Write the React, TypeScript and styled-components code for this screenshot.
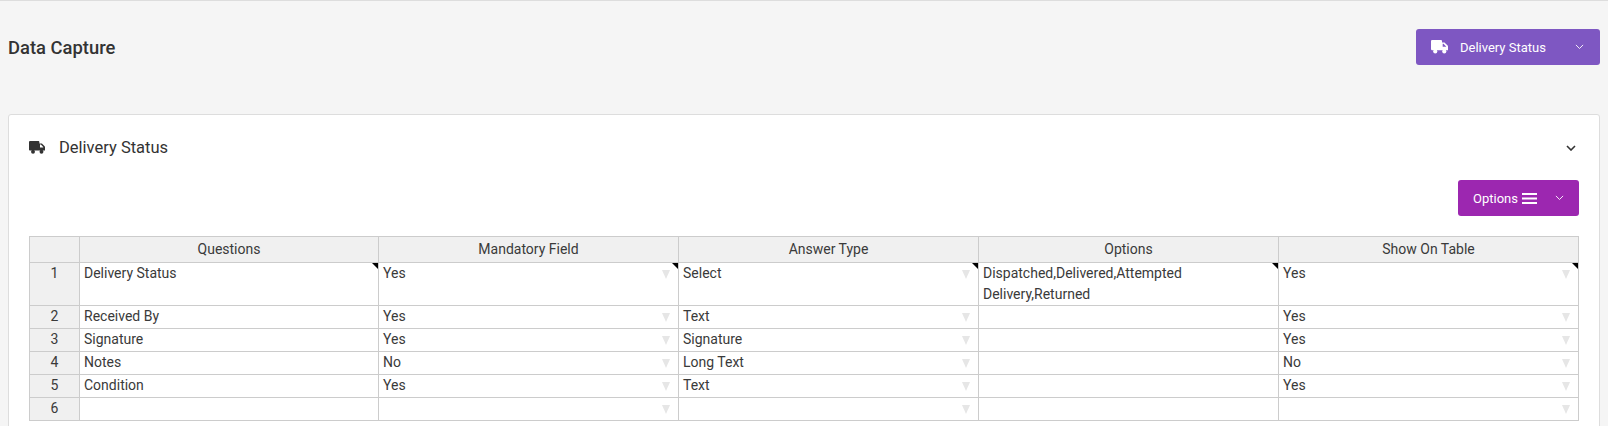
import React from "react";
import styled, { createGlobalStyle } from "styled-components";

const GlobalStyle = createGlobalStyle`
  html, body {
    margin: 0;
    padding: 0;
    background: #f5f5f5;
    font-family: Roboto, "Liberation Sans", sans-serif;
    color: #333;
    overflow: hidden;
  }
`;

const Page = styled.div`
  width: 1608px;
  height: 426px;
  box-sizing: border-box;
  border-top: 1px solid #ddd;
  overflow: hidden;
`;

const PageHeader = styled.header`
  display: flex;
  align-items: center;
  justify-content: space-between;
  height: 36px;
  margin-top: 28px;
  padding: 0 8px;
`;

const Title = styled.h1`
  margin: 1px 0 0;
  font-size: 18.4px;
  line-height: 24px;
  font-weight: 500;
  color: #333;
`;

const ActionButton = styled.button<{ $bg: string; $width: number; $pad: number }>`
  display: flex;
  align-items: center;
  box-sizing: border-box;
  width: ${(p) => p.$width}px;
  height: 36px;
  padding: 0 ${(p) => p.$pad}px 0 15px;
  border: 0;
  border-radius: 3px;
  background: ${(p) => p.$bg};
  color: #fff;
  font-family: inherit;
  font-size: 13px;
  font-weight: 400;
`;

const ButtonIcon = styled.span`
  display: flex;
  width: 29px;
`;

const ButtonLabel = styled.span`
  flex: 1;
  display: flex;
  align-items: center;
  gap: 4px;
  text-align: left;
`;

const Card = styled.section`
  box-sizing: border-box;
  height: 340px;
  margin: 49px 8px 0 8px;
  padding: 0 20px;
  background: #fff;
  border: 1px solid #ddd;
  border-radius: 3px;
`;

const CardHeader = styled.div`
  display: flex;
  align-items: center;
  height: 65px;
  padding-right: 3px;
  color: #333;
`;

const CardTitle = styled.h2`
  flex: 1;
  margin: 0 0 0 14px;
  font-size: 16.5px;
  font-weight: 400;
`;

const Toolbar = styled.div`
  display: flex;
  justify-content: flex-end;
  height: 36px;
  margin-bottom: 20px;
`;

const Sheet = styled.table`
  table-layout: fixed;
  width: 1549px;
  border-collapse: collapse;
  font-size: 14px;
  color: #3a3a3a;

  th, td {
    border: 1px solid #ccc;
    padding: 0 4px;
    line-height: 21px;
    vertical-align: top;
  }
`;

const HeadCell = styled.th`
  height: 26px;
  box-sizing: border-box;
  background: #f0f0f0;
  font-weight: 400;
  text-align: center;
  vertical-align: middle !important;
`;

const RowNumber = styled.th`
  background: #f0f0f0;
  font-weight: 400;
  text-align: center;
`;

const Cell = styled.td`
  position: relative;
  height: 23px;
  box-sizing: border-box;
  background: #fff;
`;

const Arrow = styled.span`
  position: absolute;
  top: 7px;
  right: 8px;
  width: 0;
  height: 0;
  border-left: 4.5px solid transparent;
  border-right: 4.5px solid transparent;
  border-top: 9px solid #e6e6e6;
`;

const Comment = styled.span`
  position: absolute;
  top: 0;
  right: 0;
  width: 0;
  height: 0;
  border-left: 6px solid transparent;
  border-top: 6px solid #000;
`;

const Truck = ({ size }: { size: number }) => (
  <svg width={size} height={size * 0.8} viewBox="0 0 640 512" fill="currentColor">
    <path d="M640 384V243.900c0-12.700-5.100-24.900-14.100-33.900L526 110.100c-9-9-21.200-14.100-33.900-14.100H416V48c0-26.500-21.500-48-48-48H48C21.500 0 0 21.500 0 48v304c0 17.700 14.300 32 32 32h608zM570 256H440V144h32l98 99.900V256z" />
    <circle cx="160" cy="430" r="78" />
    <circle cx="500" cy="430" r="78" />
  </svg>
);

const Chevron = ({ width, stroke }: { width: number; stroke: number }) => (
  <svg width={width} height={width * 0.6} viewBox="0 0 10 6" fill="none" stroke="currentColor" strokeWidth={stroke}>
    <path d="M1 1l4 4 4-4" />
  </svg>
);

const Bars = () => (
  <svg width="15" height="11" viewBox="0 0 15 11" fill="currentColor">
    <rect y="0" width="15" height="2" />
    <rect y="4.500" width="15" height="2" />
    <rect y="9" width="15" height="2" />
  </svg>
);

const columns = [
  { name: "Questions", dropdown: false, width: 299 },
  { name: "Mandatory Field", dropdown: true, width: 300 },
  { name: "Answer Type", dropdown: true, width: 300 },
  { name: "Options", dropdown: false, width: 300 },
  { name: "Show On Table", dropdown: true, width: 300 },
];

const rows = [
  ["Delivery Status", "Yes", "Select", "Dispatched,Delivered,Attempted Delivery,Returned", "Yes"],
  ["Received By", "Yes", "Text", "", "Yes"],
  ["Signature", "Yes", "Signature", "", "Yes"],
  ["Notes", "No", "Long Text", "", "No"],
  ["Condition", "Yes", "Text", "", "Yes"],
  ["", "", "", "", ""],
];

export default function App() {
  return (
    <Page>
      <GlobalStyle />
      <PageHeader>
        <Title>Data Capture</Title>
        <ActionButton $bg="#7e57c2" $width={184} $pad={16}>
          <ButtonIcon>
            <Truck size={17} />
          </ButtonIcon>
          <ButtonLabel>Delivery Status</ButtonLabel>
          <Chevron width={9} stroke={1} />
        </ActionButton>
      </PageHeader>
      <Card>
        <CardHeader>
          <Truck size={16} />
          <CardTitle>Delivery Status</CardTitle>
          <Chevron width={10} stroke={1.6} />
        </CardHeader>
        <Toolbar>
          <ActionButton $bg="#9c27b0" $width={121} $pad={15}>
            <ButtonLabel>
              Options <Bars />
            </ButtonLabel>
            <Chevron width={9} stroke={1} />
          </ActionButton>
        </Toolbar>
        <Sheet>
          <colgroup>
            <col style={{ width: 50 }} />
            {columns.map((c) => (
              <col key={c.name} style={{ width: c.width }} />
            ))}
          </colgroup>
          <thead>
            <tr>
              <HeadCell />
              {columns.map((c) => (
                <HeadCell key={c.name}>{c.name}</HeadCell>
              ))}
            </tr>
          </thead>
          <tbody>
            {rows.map((row, i) => (
              <tr key={i}>
                <RowNumber>{i + 1}</RowNumber>
                {row.map((value, j) => (
                  <Cell key={j}>
                    {value}
                    {columns[j].dropdown && <Arrow />}
                    {i === 0 && <Comment />}
                  </Cell>
                ))}
              </tr>
            ))}
          </tbody>
        </Sheet>
      </Card>
    </Page>
  );
}
